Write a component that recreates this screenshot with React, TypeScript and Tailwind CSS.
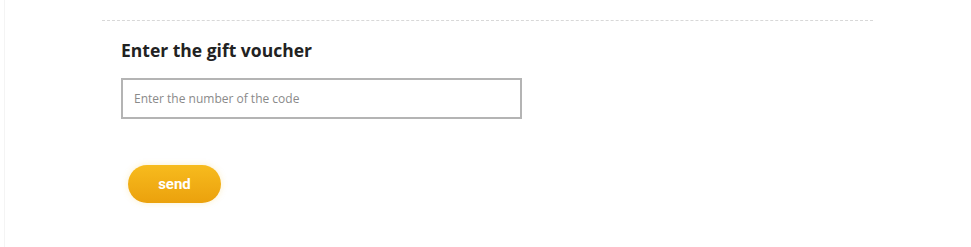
import React from 'react';

const App: React.FC = () => {
    return (
        <div className="w-[971px] h-[247px] bg-white overflow-hidden" style={{ fontFamily: '"Open Sans", "Noto Sans", sans-serif' }}>
            <div className="h-full ml-[4px] border-l border-[#f4f4f4] pt-[20px]">
                <div className="ml-[97px] w-[771px]">
                    <div className="border-t border-dashed border-[#d8d8d8]" />

                    <div className="pl-[19px] pt-[18px]">
                        <h2 className="text-[17.5px] leading-[22px] font-bold text-[#222]">
                            Enter the gift voucher
                        </h2>

                        <input
                            type="text"
                            placeholder="Enter the number of the code"
                            className="mt-[17px] block w-[401px] h-[41px] border-2 border-[#b4b4b4] px-[11px] text-[12px] text-[#333] placeholder:text-[#8a8a8a] outline-none"
                        />

                        <button
                            type="button"
                            className="mt-[46px] ml-[7px] w-[93px] h-[38px] rounded-full bg-gradient-to-b from-[#f7bb1d] to-[#eba10c] text-white text-[15px] font-bold shadow-[0_0_6px_rgba(245,190,40,0.25)]"
                            style={{ fontFamily: 'Roboto, "Liberation Sans", sans-serif' }}
                        >
                            send
                        </button>
                    </div>
                </div>
            </div>
        </div>
    );
};

export default App;
